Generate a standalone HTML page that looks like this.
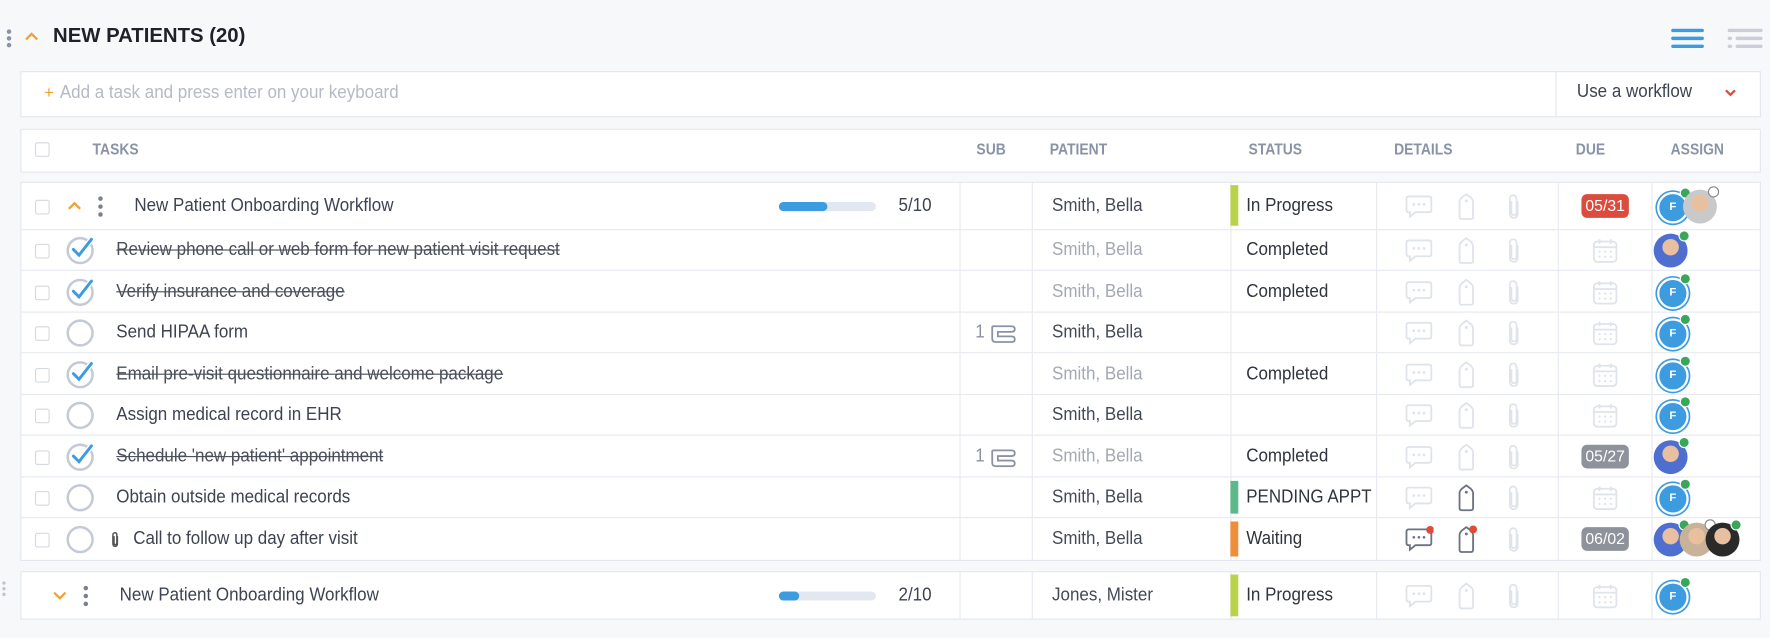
<!DOCTYPE html>
<html><head><meta charset="utf-8"><style>
html,body{margin:0;padding:0;background:#f7f8fa;width:1770px;height:638px;overflow:hidden}
#w{position:absolute;left:0;top:0;width:1568px;height:565px;transform:scale(1.1288);transform-origin:0 0;font-family:"Liberation Sans",sans-serif;color:#3d4350}
.a{position:absolute}
.box{position:absolute;background:#fff;border:1px solid #e3e6ee;box-sizing:border-box}
.row{position:absolute;left:18px;width:1542px;border-bottom:1px solid #e6e9f0;box-sizing:border-box}
.vl{position:absolute;top:0;bottom:0;width:1px;background:#e6e9f0}
.cb{position:absolute;left:13px;width:11px;height:11px;border:1px solid #d5d9e0;border-radius:2px;background:#fff}
.t,.pt,.st{position:absolute;font-size:16px;white-space:nowrap;transform:scaleX(0.94);transform-origin:0 0}
.s{text-decoration:line-through;color:#4a4f5a}
.pt{left:914px;color:#444a55}
.g{color:#a3a8b2}
.st{left:1086px;color:#2f343d}
.bar{position:absolute;left:1072px;width:7px}
.ic{position:absolute}
.hd{position:absolute;top:124px;font-size:14px;font-weight:bold;color:#8a93a6;transform:scaleX(0.88);transform-origin:0 0}
.av{position:absolute;width:30px;height:30px;border-radius:50%}
.f{background:#3d9be0;color:#fff;font-size:10px;font-weight:bold;text-align:center;line-height:24px;width:24px;height:24px;border:2px solid #fff;box-shadow:0 0 0 1.5px #3d9be0}
.dot{position:absolute;width:8px;height:8px;border-radius:50%;background:#3aa65a;border:1px solid #fff}
.due{position:absolute;left:1383px;width:42px;height:21px;border-radius:5px;color:#fff;font-size:14px;text-align:center;line-height:21px}
</style></head><body><div id="w">
<div class="a" style="left:6px;top:26px;width:4px">
<div style="width:4px;height:4px;border-radius:50%;background:#8a93a6;margin-bottom:2px"></div><div style="width:4px;height:4px;border-radius:50%;background:#8a93a6;margin-bottom:2px"></div><div style="width:4px;height:4px;border-radius:50%;background:#8a93a6"></div></div>
<svg class="a" style="left:21px;top:27px" width="14" height="10"><path d="M2 8 L7 3 L12 8" stroke="#f0a030" stroke-width="2" fill="none"/></svg>
<div class="a" style="left:47px;top:21px;font-size:18px;font-weight:bold;color:#1d2128">NEW PATIENTS (20)</div>
<svg class="a" style="left:1480px;top:24px" width="30" height="20"><g stroke="#3d9be0" stroke-width="3" stroke-linecap="round"><path d="M2 3H28M2 10H28M2 17H28"/></g></svg>
<svg class="a" style="left:1530px;top:24px" width="32" height="20"><g stroke="#c9ced8" stroke-width="3" stroke-linecap="round"><path d="M2 3H30M9 10H30M9 17H30M2 10H3M2 17H3"/></g></svg>
<div class="box" style="left:18px;top:63px;width:1542px;height:41px"></div>
<div class="a" style="left:1378px;top:63px;width:1px;height:41px;background:#e3e6ee"></div>
<div class="a" style="left:39px;top:74px;font-size:15px;color:#f0a030">+</div>
<div class="t" style="left:53px;top:74px;color:#b5bac4">Add a task and press enter on your keyboard</div>
<div class="t" style="left:1397px;top:73px;color:#3d4350">Use a workflow</div>
<svg class="a" style="left:1527px;top:78px" width="12" height="8"><path d="M2 2 L6 6 L10 2" stroke="#e04a3a" stroke-width="2" fill="none"/></svg>
<div class="box" style="left:18px;top:114px;width:1542px;height:39px"></div>
<div class="cb" style="left:31px;top:126px"></div>
<div class="hd" style="left:82px">TASKS</div><div class="hd" style="left:865px">SUB</div><div class="hd" style="left:930px">PATIENT</div><div class="hd" style="left:1106px">STATUS</div><div class="hd" style="left:1235px">DETAILS</div><div class="hd" style="left:1396px">DUE</div><div class="hd" style="left:1480px">ASSIGN</div>
<div class="box" style="left:18px;top:161px;width:1542px;height:336px"></div>
<div id="g1"></div>
<div class="box" style="left:18px;top:506px;width:1542px;height:43px"></div>
<div class="a" style="left:2px;top:515px;width:3px"><div style="width:3px;height:3px;border-radius:50%;background:#c0c5cf;margin-bottom:2px"></div><div style="width:3px;height:3px;border-radius:50%;background:#c0c5cf;margin-bottom:2px"></div><div style="width:3px;height:3px;border-radius:50%;background:#c0c5cf"></div></div>
<div id="g2"></div>
</div>
<script>
var chat=function(c,d){return '<svg width="26" height="24" viewBox="0 0 26 24"><path d="M4 3H22Q24 3 24 5V15Q24 17 22 17H10L5 21V17H4Q2 17 2 15V5Q2 3 4 3Z" fill="none" stroke="'+c+'" stroke-width="1.6"/><circle cx="8.5" cy="10" r="1.2" fill="'+c+'"/><circle cx="13" cy="10" r="1.2" fill="'+c+'"/><circle cx="17.5" cy="10" r="1.2" fill="'+c+'"/>'+(d?'<circle cx="23" cy="3.5" r="3.5" fill="#e04a3a"/>':'')+'</svg>'};
var tag=function(c,d){return '<svg width="20" height="26" viewBox="0 0 20 26"><path d="M4 9Q4 7 6 5L10 2L14 5Q16 7 16 9V22Q16 24 14 24H6Q4 24 4 22Z" fill="none" stroke="'+c+'" stroke-width="1.6" stroke-linejoin="round"/><circle cx="10" cy="8" r="1.3" fill="'+c+'"/>'+(d?'<circle cx="16" cy="4" r="3.5" fill="#e04a3a"/>':'')+'</svg>'};
var clip=function(c){return '<svg width="16" height="26" viewBox="0 0 16 26"><path d="M11.5 8V18.5Q11.5 23 8 23Q4.5 23 4.5 18.5V6.5Q4.5 3 7.5 3Q10.5 3 10.5 6.5V18Q10.5 20.5 8 20.5Q6 20.5 6 18V8" fill="none" stroke="'+c+'" stroke-width="1.5"/></svg>'};
var cal='<svg width="24" height="24" viewBox="0 0 24 24"><rect x="2" y="4" width="20" height="18" rx="3" fill="none" stroke="#dfe3ea" stroke-width="1.6"/><path d="M2 9H22M7 2V6M17 2V6" stroke="#dfe3ea" stroke-width="1.6"/><g fill="#dfe3ea"><circle cx="7" cy="13" r="1"/><circle cx="12" cy="13" r="1"/><circle cx="17" cy="13" r="1"/><circle cx="7" cy="17.5" r="1"/><circle cx="12" cy="17.5" r="1"/><circle cx="17" cy="17.5" r="1"/></g></svg>';
var L='#dfe3ea';
function circ(done){return '<svg width="28" height="28" viewBox="0 0 28 28"><circle cx="13" cy="15" r="11" fill="none" stroke="#c3cad6" stroke-width="2.2"/>'+(done?'<path d="M7 14L12 19L23 5" stroke="#fff" stroke-width="5" fill="none"/><path d="M7 14L12 19L23 5" stroke="#3d9be0" stroke-width="2.6" fill="none" stroke-linecap="round"/>':'')+'</svg>'}
function fav(x,y){return '<div class="av f" style="left:'+x+'px;top:'+y+'px">F</div><div class="dot" style="left:'+(x+20)+'px;top:'+(y-4)+'px"></div>'}
function pav(x,y,col,dotc){return '<div class="av" style="left:'+x+'px;top:'+y+'px;background:radial-gradient(circle at 50% 40%,#e8c0a0 0 30%,'+col+' 32%)"></div>'+(dotc?'<div class="dot" style="left:'+(x+22)+'px;top:'+(y-3)+'px;background:'+dotc+(dotc=='#fff'?';border:1px solid #888':'')+'"></div>':'')}
function row(top,h,o){
 var m=h/2, ty=m-9, s='<div class="row" style="top:'+top+'px;height:'+h+'px;'+(o.last?'border-bottom:none':'')+'">';
 [832,896,1072,1201,1362,1445].forEach(function(x){s+='<div class="vl" style="left:'+x+'px"></div>'});
 if(!o.nocb)s+='<div class="cb" style="top:'+(m-6)+'px"></div>';
 if(o.wf){
  s+='<svg class="a" style="left:'+o.cx+'px;top:'+(m-5)+'px" width="12" height="9"><path d="'+(o.up?'M1 7L6 2L11 7':'M1 2L6 7L11 2')+'" stroke="#f0a030" stroke-width="2" fill="none"/></svg>';
  s+='<div class="a" style="left:'+o.dx+'px;top:'+(m-9)+'px">'+[0,1,2].map(function(){return '<div style="width:4px;height:4px;border-radius:50%;background:#7a8090;margin-bottom:3px"></div>'}).join('')+'</div>';
  s+='<div class="t" style="left:'+o.tx+'px;top:'+ty+'px;color:#3d4350">'+o.text+'</div>';
  s+='<div class="a" style="left:672px;top:'+(m-4)+'px;width:86px;height:8px;border-radius:4px;background:#e3e7ef"><div style="width:'+o.p+'px;height:8px;border-radius:4px;background:#3d9be0"></div></div>';
  s+='<div class="t" style="left:778px;top:'+ty+'px;color:#3d4350">'+o.pr+'</div>';
 } else {
  s+='<div class="a" style="left:40px;top:'+(m-15)+'px">'+circ(o.done)+'</div>';
  var tx=85; if(o.clip){s+='<svg class="a" style="left:79px;top:'+(m-8)+'px" width="10" height="16"><path d="M7 5V11.5Q7 14 5 14Q3 14 3 11.5V4Q3 2 5 2Q6.5 2 6.5 4V11Q6.5 12.5 5 12.5Q4 12.5 4 11V5" fill="none" stroke="#555" stroke-width="1.3"/></svg>';tx=100}
  s+='<div class="t'+(o.done?' s':'')+'" style="left:'+tx+'px;top:'+ty+'px">'+o.text+'</div>';
 }
 if(o.sub){s+='<div class="t" style="left:846px;top:'+ty+'px;color:#8a93a6">1</div><svg class="a" style="left:858px;top:'+(m-9)+'px" width="26" height="18"><path d="M3 3H20Q23 3 23 5.5Q23 8 20 8H8V12H20Q23 12 23 14.5Q23 17 20 17H6Q3 17 3 14V3" fill="none" stroke="#8a93a6" stroke-width="1.6"/></svg>'}
 s+='<div class="pt'+(o.done?' g':'')+'" style="top:'+ty+'px">'+(o.pat||'Smith, Bella')+'</div>';
 if(o.bar)s+='<div class="bar" style="top:3px;bottom:3px;background:'+o.bar+'"></div>';
 if(o.st)s+='<div class="st" style="top:'+ty+'px">'+o.st+'</div>';
 s+='<div class="ic" style="left:1226px;top:'+(m-12)+'px">'+chat(o.dc?'#6b7280':L,o.dc)+'</div>';
 s+='<div class="ic" style="left:1271px;top:'+(m-13)+'px">'+tag(o.dt?'#6b7280':L,o.dt=='r')+'</div>';
 s+='<div class="ic" style="left:1315px;top:'+(m-13)+'px">'+clip(L)+'</div>';
 if(o.due)s+='<div class="due" style="top:'+(m-11)+'px;background:'+o.dueC+'">'+o.due+'</div>';
 else s+='<div class="ic" style="left:1392px;top:'+(m-12)+'px">'+cal+'</div>';
 s+=o.av(m);
 return s+'</div>';
}
var F=function(m){return fav(1450,m-13)};
var P=function(m){return pav(1447,m-15,'#4f6fd0','#3aa65a')};
var g1='';
g1+=row(161,43,{wf:1,up:1,cx:42,dx:69,tx:101,text:'New Patient Onboarding Workflow',p:43,pr:'5/10',bar:'#b9d24a',st:'In Progress',due:'05/31',dueC:'#dc4c3e',av:function(m){return fav(1450,m-13)+pav(1473,m-15,'#c9c9c9','#fff')}});
var rs=[
['Review phone call or web form for new patient visit request',1,0,'Completed',P],
['Verify insurance and coverage',1,0,'Completed',F],
['Send HIPAA form',0,1,'',F],
['Email pre-visit questionnaire and welcome package',1,0,'Completed',F],
['Assign medical record in EHR',0,0,'',F],
['Schedule \'new patient\' appointment',1,1,'Completed',P]];
var tops=[204,240,277,313,350,386,423,459,496];
rs.forEach(function(r,i){g1+=row(tops[i],tops[i+1]-tops[i],{text:r[0],done:r[1],sub:r[2],st:r[3],av:r[4],due:i==5?'05/27':0,dueC:'#8e929b'})});
g1+=row(423,36,{text:'Obtain outside medical records',bar:'#5db88a',st:'PENDING APPT',dt:'g',av:F});
g1+=row(459,37,{text:'Call to follow up day after visit',clip:1,bar:'#ee8e3a',st:'Waiting',dc:1,dt:'r',due:'06/02',dueC:'#8e929b',last:1,av:function(m){return pav(1447,m-15,'#4f6fd0','#3aa65a')+pav(1470,m-15,'#c8b39a','#fff')+pav(1493,m-15,'#2a2a2a','#3aa65a')}});
document.getElementById('g1').outerHTML=g1;
document.getElementById('g2').outerHTML=row(506,43,{wf:1,up:0,nocb:1,cx:29,dx:56,tx:88,text:'New Patient Onboarding Workflow',p:18,pr:'2/10',pat:'Jones, Mister',bar:'#b9d24a',st:'In Progress',last:1,av:F});
</script>
</body></html>
